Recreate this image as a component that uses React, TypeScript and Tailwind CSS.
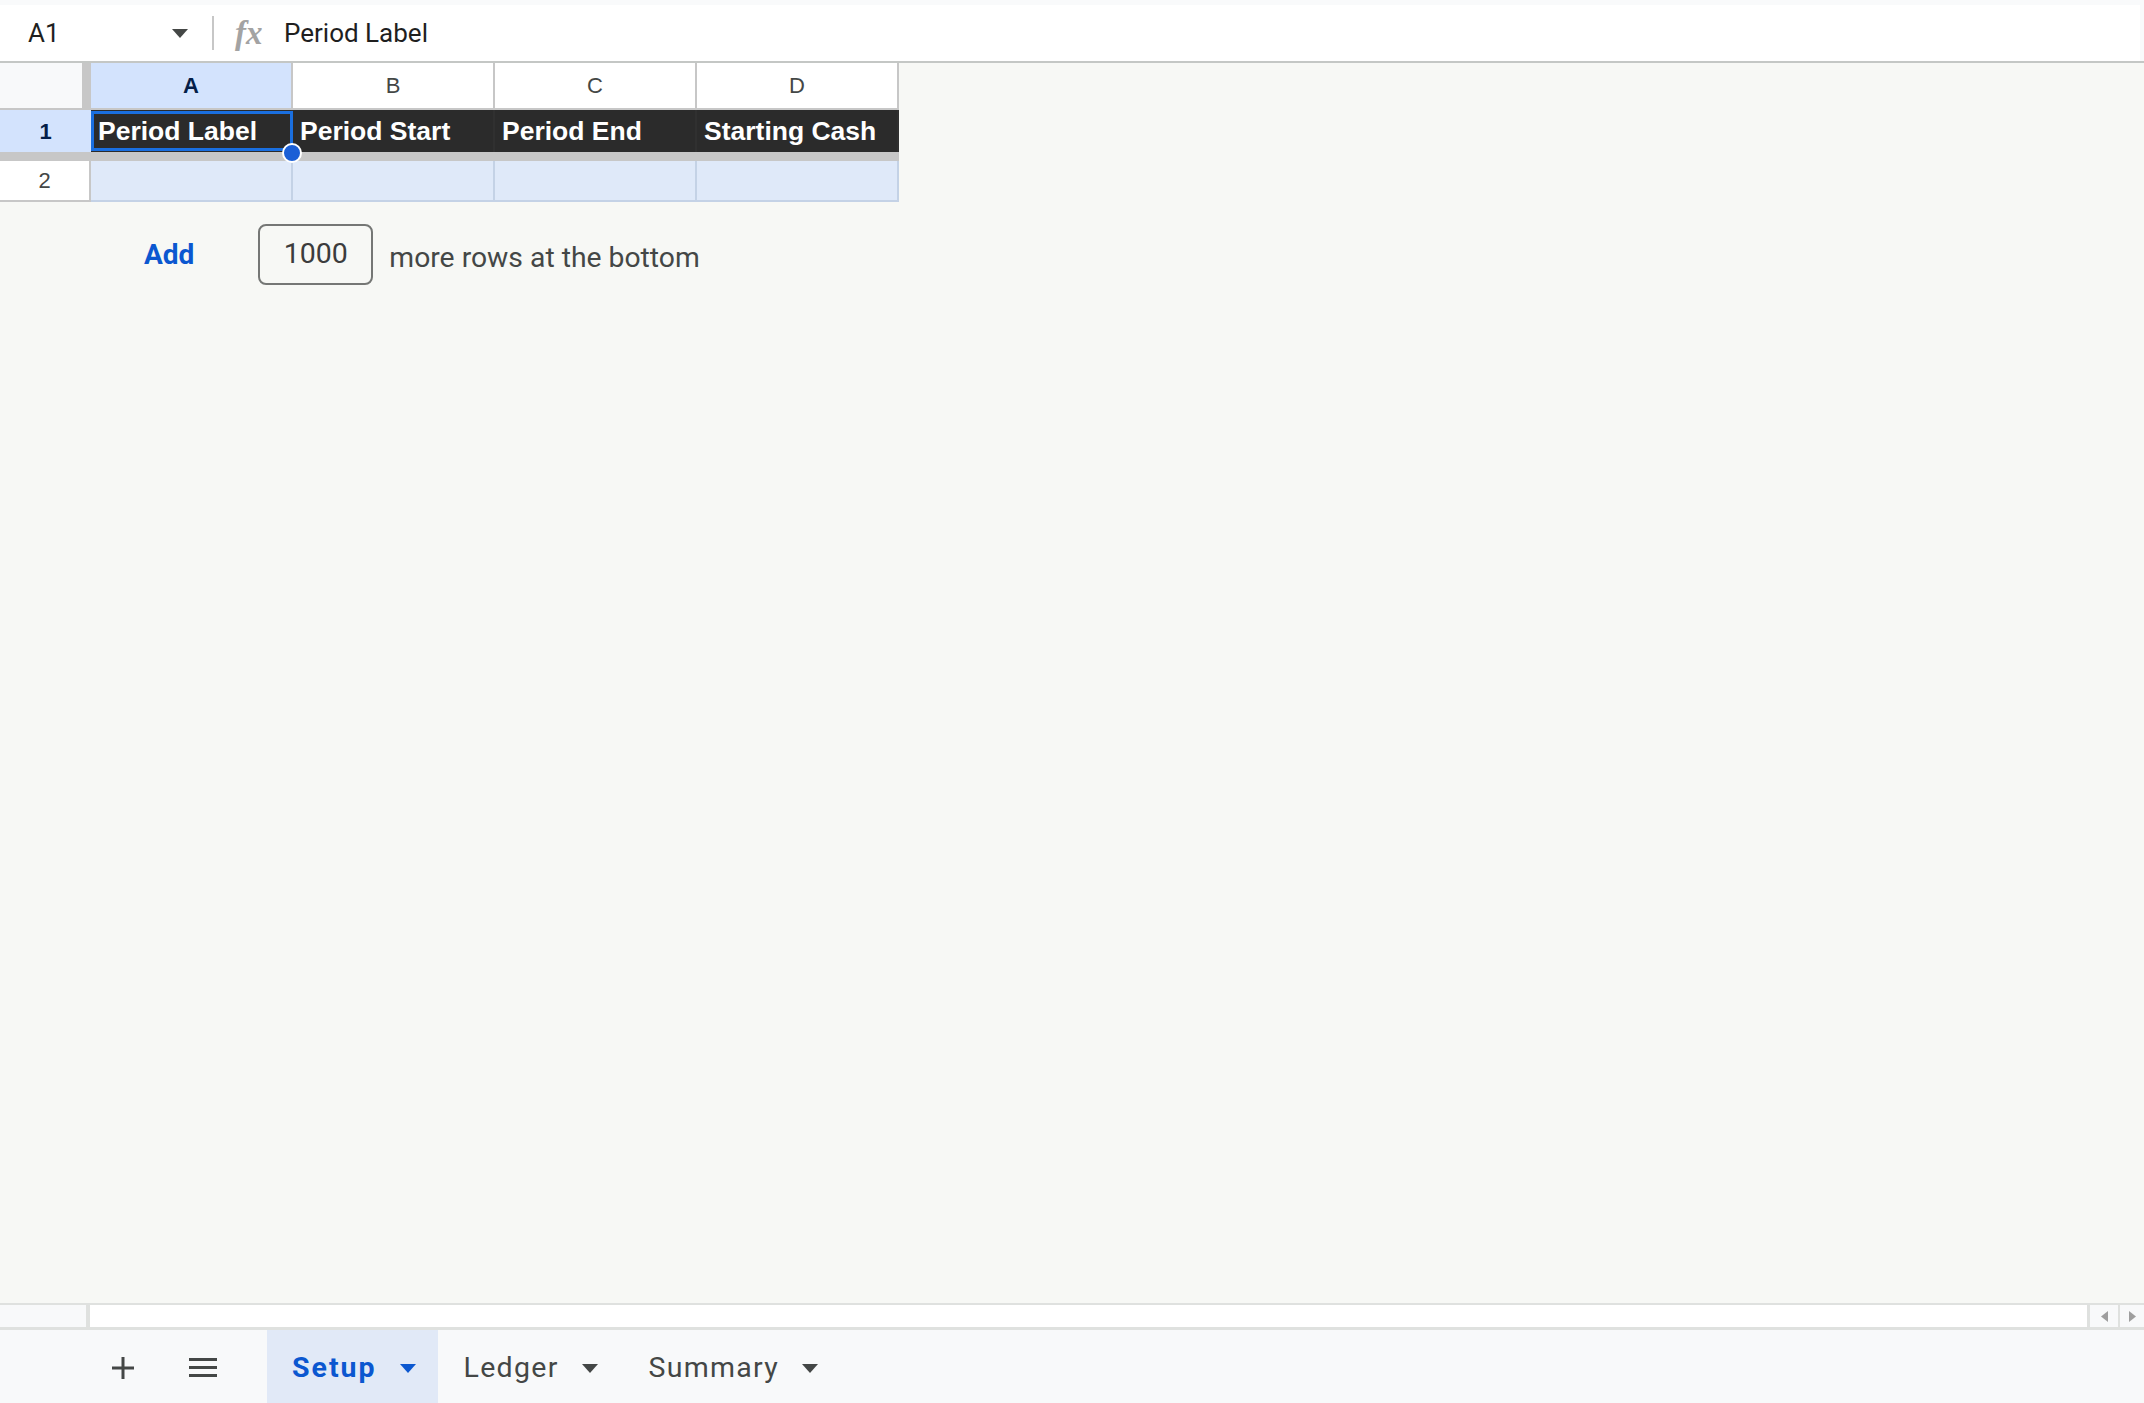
import React from "react";

const COLS = ["A", "B", "C", "D"];
const HEADERS = ["Period Label", "Period Start", "Period End", "Starting Cash"];

function Caret({ className }: { className?: string }) {
  return (
    <svg width="16" height="9" viewBox="0 0 16 9" className={className}>
      <path d="M0 0h16L8 9z" fill="currentColor" />
    </svg>
  );
}

function FormulaBar() {
  return (
    <div className="h-[63px] flex-none border-b-2 border-[#c4c7c5] bg-[#f9fafb] pr-[4px] pt-[5px]">
      <div className="flex h-[56px] items-center bg-white font-['Roboto'] text-[26px] text-[#1f1f1f]">
        <div className="flex w-[212px] items-center pl-[28px]">
          <span className="flex-1 leading-none">A1</span>
          <Caret className="mr-[24px] text-[#444746]" />
        </div>
        <div className="h-[34px] w-[2px] bg-[#c7c7c7]" />
        <span className="ml-[21px] w-[49px] font-['Liberation_Serif'] text-[33px] font-bold italic leading-none text-[#a3a3a3]">
          fx
        </span>
        <span className="leading-none">Period Label</span>
      </div>
    </div>
  );
}

function Grid() {
  return (
    <div className="flex-none font-['Liberation_Sans',Arial,sans-serif]">
      {/* column headers */}
      <div className="flex h-[47px]">
        <div className="w-[82px] border-b-2 border-[#c7c7c7] bg-[#f8f9fa]" />
        <div className="w-[9px] bg-[#c7c7c7]" />
        {COLS.map((c, i) => (
          <div
            key={c}
            className={
              i === 0
                ? "flex w-[202px] items-center justify-center border-b-2 border-r-2 border-[#c7c7c7] bg-[#d3e3fd] text-[22px] font-bold text-[#041e49]"
                : "flex w-[202px] items-center justify-center border-b-2 border-r-2 border-[#c7c7c7] bg-white text-[22px] text-[#444746]"
            }
          >
            {c}
          </div>
        ))}
      </div>

      {/* row 1 */}
      <div className="flex h-[42px]">
        <div className="flex w-[91px] items-center justify-center bg-[#d3e3fd] text-[22px] font-bold text-[#041e49]">
          1
        </div>
        {HEADERS.map((h, i) => (
          <div
            key={h}
            className="relative flex w-[202px] items-center border-r-2 border-[#303030] bg-[#2b2b2b] pl-[7px] text-[26.5px] font-bold text-white"
          >
            <span className="whitespace-nowrap leading-none">{h}</span>
            {i === 0 && (
              <>
                <div className="absolute inset-y-[1px] left-0 right-[-2px] border-[3px] border-[#1a6fe0]" />
                <div className="absolute bottom-[-11px] right-[-11px] z-10 h-[20px] w-[20px] rounded-full border-2 border-white bg-[#1b5fd6]" />
              </>
            )}
          </div>
        ))}
      </div>

      {/* frozen divider */}
      <div className="h-[9px] w-[899px] bg-[#c7c7c7]" />

      {/* row 2 */}
      <div className="flex h-[41px]">
        <div className="flex w-[91px] items-center justify-center border-b-2 border-r-2 border-[#c7c7c7] bg-white text-[22px] text-[#444746]">
          2
        </div>
        {COLS.map((c) => (
          <div
            key={c}
            className="w-[202px] border-b-2 border-r-2 border-[#c4d2e6] bg-[#dfe9f9]"
          />
        ))}
      </div>
    </div>
  );
}

function AddRows() {
  return (
    <div className="flex flex-none items-center pl-[144px] pt-[22px] font-['Roboto']">
      <span className="text-[28px] font-bold leading-none text-[#0b57d0]">Add</span>
      <div className="ml-[64px] flex h-[61px] w-[115px] items-center justify-center rounded-[8px] border-2 border-[#757775] text-[28.5px] text-[#3c3c3c]">
        1000
      </div>
      <span className="ml-[16px] mt-[8px] text-[28.3px] leading-none text-[#444746]">
        more rows at the bottom
      </span>
    </div>
  );
}

function ScrollRow() {
  return (
    <div className="flex h-[27px] flex-none border-b-[3px] border-t-2 border-[#dfe1df]">
      <div className="w-[90px] border-r-4 border-[#dfe1df] bg-[#f8f9fa]" />
      <div className="flex-1 bg-white" />
      <div className="flex w-[31px] items-center justify-center border-l-[3px] border-[#dfe1df] bg-[#f8f9fa]">
        <svg width="7" height="11" viewBox="0 0 7 11">
          <path d="M7 0v11L0 5.5z" fill="#9e9e9e" />
        </svg>
      </div>
      <div className="flex w-[26px] items-center justify-center border-l-2 border-[#dfe1df] bg-[#f8f9fa]">
        <svg width="7" height="11" viewBox="0 0 7 11">
          <path d="M0 0v11l7-5.5z" fill="#9e9e9e" />
        </svg>
      </div>
    </div>
  );
}

function Tab({ label, active }: { label: string; active?: boolean }) {
  return (
    <div
      className={
        active
          ? "flex h-full items-center gap-[23px] bg-[#e1e9f7] pl-[25px] pr-[22px] pt-[3px] text-[#0b57d0]"
          : "flex h-full items-center gap-[23px] pl-[26px] pr-[25px] pt-[3px] text-[#444746]"
      }
    >
      <span
        className={
          active
            ? "text-[28.5px] font-bold leading-none tracking-[0.07em]"
            : "text-[28.5px] leading-none tracking-[0.045em]"
        }
      >
        {label}
      </span>
      <Caret />
    </div>
  );
}

function TabBar() {
  return (
    <div className="flex h-[73px] flex-none items-center bg-[#f8f9fa] font-['Roboto']">
      <svg width="22" height="22" viewBox="0 0 22 22" className="ml-[112px] mt-[3px]">
        <path d="M11 0v22M0 11h22" stroke="#444746" strokeWidth="3" />
      </svg>
      <svg width="28" height="20" viewBox="0 0 28 20" className="ml-[55px] mt-[3px]">
        <path d="M0 1.5h28M0 9.5h28M0 17.5h28" stroke="#444746" strokeWidth="3" />
      </svg>
      <div className="ml-[50px] flex h-full">
        <Tab label="Setup" active />
        <Tab label="Ledger" />
        <Tab label="Summary" />
      </div>
    </div>
  );
}

export default function App() {
  return (
    <div className="flex h-screen w-full flex-col overflow-hidden bg-[#f7f8f5]">
      <FormulaBar />
      <Grid />
      <AddRows />
      <div className="flex-1" />
      <ScrollRow />
      <TabBar />
    </div>
  );
}
